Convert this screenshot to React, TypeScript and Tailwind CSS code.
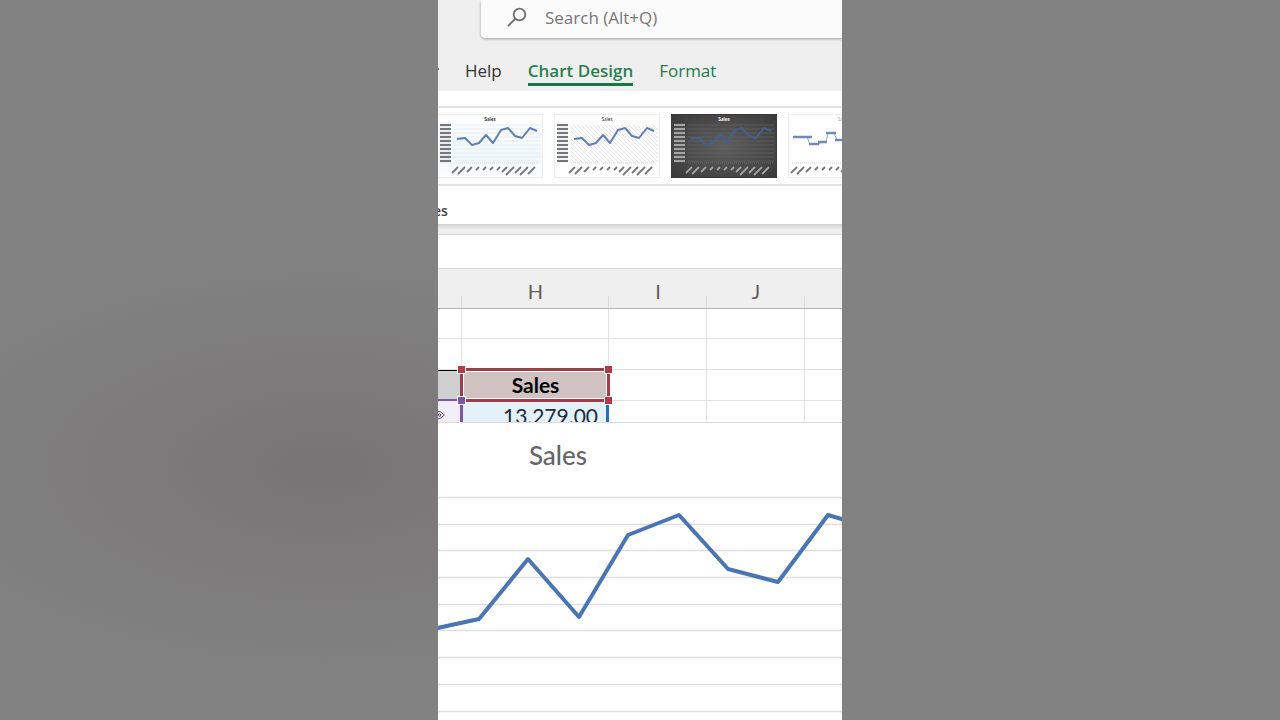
import React from 'react';

type ThumbVariant = 'tinted' | 'hatched' | 'dark' | 'stepped';

interface ChartThumbProps {
    variant: ThumbVariant;
}

const VARIANTS: ThumbVariant[] = ['tinted', 'hatched', 'dark', 'stepped'];

const TREND = '20,25 28,24 35,31 42,29 49,21 56,29 64,16 71,14 78,22 85,24 93,14 100,17';

// Length of every slanted month label below the small plots
const MONTHS = [6, 7, 5, 3, 3, 3, 3, 5, 8, 6, 8, 7];

const Y_TICKS = [11, 15, 19, 23, 27, 31, 35, 39, 43, 47];

const GRID_LINES = [75, 102, 128, 155, 182, 208, 235, 262, 289];

const SALES_LINE = '-10,207 41,196 90,136 141,194 190,112 241,92 290,146 340,159 390,92 410,98';

const ChartThumb: React.FC<ChartThumbProps> = ({ variant }) => {
    const dark = variant === 'dark';
    const stepped = variant === 'stepped';
    const ink = dark ? '#a4a4a4' : '#74777c';
    const firstMonth = stepped ? 9 : 21;

    return (
        <button type="button" aria-label={`Chart style: ${variant}`} className="shrink-0">
            <svg width="106" height="64" viewBox="0 0 106 64" className="block">
                <defs>
                    <pattern id="hatch" width="4" height="4" patternUnits="userSpaceOnUse">
                        <path d="M-1 -1L5 5M-1 3L1 5M3 -1L5 1" stroke="#dcdcdf" strokeWidth="0.7" />
                    </pattern>
                    <linearGradient id="tint" x1="0" y1="0" x2="0" y2="1">
                        <stop offset="0" stopColor="#fbfdfe" />
                        <stop offset="0.6" stopColor="#f1f8fc" />
                        <stop offset="1" stopColor="#fbfdfe" />
                    </linearGradient>
                    <radialGradient id="slate" r="0.7">
                        <stop offset="0" stopColor="#5e5e5e" />
                        <stop offset="1" stopColor="#3a3a3a" />
                    </radialGradient>
                </defs>
                <rect x="0.5" y="0.5" width="105" height="63" fill={dark ? 'url(#slate)' : '#fff'} stroke={dark ? '#3a3a3a' : '#ececec'} />
                {variant === 'tinted' && <rect x="1" y="10" width="104" height="53" fill="url(#tint)" />}
                {variant === 'hatched' && <rect x="17" y="11" width="87" height="38" fill="url(#hatch)" />}
                {!stepped && Y_TICKS.map((y) => (
                    <g key={y}>
                        {variant !== 'hatched' && <path d={`M17 ${y}H103`} stroke={dark ? '#656565' : '#dce7ec'} strokeWidth="0.7" />}
                        <path d={`M3 ${y}H14`} stroke={ink} strokeWidth="2.2" />
                    </g>
                ))}
                <path d={`M${stepped ? 4 : 17} 49H103`} stroke={dark ? '#777' : '#cfcfcf'} strokeWidth="0.8" strokeDasharray="1 1" />
                {MONTHS.map((len, i) => {
                    const x = firstMonth + i * 7;
                    return (
                        <path key={i} d={`M${x} 53L${x - len} ${53 + len}`} stroke={ink} strokeWidth="1.8" />
                    );
                })}
                <text
                    x={stepped ? 55 : 53}
                    y="7"
                    textAnchor="middle"
                    fontSize="5"
                    fontWeight={variant === 'hatched' || stepped ? 400 : 700}
                    fill={dark ? '#fff' : stepped ? '#aaa' : '#333'}
                    fontFamily="Lato, sans-serif"
                >
                    Sales
                </text>
                {stepped ? (
                    <>
                        <path d="M5 23H19L22 30H30L34 28H38L40 19H46L49 26H55L59 16H64" fill="none" stroke="#8fa6c8" strokeWidth="1" />
                        <path d="M5 23H24M21 30H31M30 28H39M38 19H48M47 26H55" stroke="#6f8cb8" strokeWidth="2.4" />
                    </>
                ) : (
                    <polyline points={TREND} fill="none" stroke={dark ? '#435f8a' : '#6080b4'} strokeWidth="2" strokeLinejoin="round" />
                )}
            </svg>
        </button>
    );
};

const Handle: React.FC<{ className: string }> = ({ className }) => (
    <span className={`absolute w-[9px] h-[9px] border border-white z-10 ${className}`} />
);

const Sheet: React.FC = () => (
    <div className="h-[154px] overflow-hidden border-t border-[#d9d9d9]">
        <table className="w-full table-fixed border-separate border-spacing-0 font-[Lato,sans-serif] text-[21px] leading-6">
            <colgroup>
                <col className="w-6" />
                <col className="w-[147px]" />
                <col className="w-[98px]" />
                <col className="w-[98px]" />
                <col />
            </colgroup>
            <thead>
                <tr className="h-10 bg-[#efefef] text-[#5d5d5d]">
                    {['', 'H', 'I', 'J', ''].map((name, i) => (
                        <th key={i} scope="col" className="relative border-b border-[#b5b5b5] p-0 pt-1 text-xl font-normal">
                            {name}
                            {i < 4 && <span className="absolute right-0 bottom-0 h-3 w-px bg-[#d9d9d9]" />}
                        </th>
                    ))}
                </tr>
            </thead>
            <tbody>
                {[0, 1].map((row) => (
                    <tr key={row} className={row === 0 ? 'h-[30px]' : 'h-[31px]'}>
                        {[0, 1, 2, 3, 4].map((col) => (
                            <td key={col} className="border-r border-b border-[#e1e1e4] p-0 last:border-r-0" />
                        ))}
                    </tr>
                ))}
                <tr className="h-[31px]">
                    <td className="border-t border-b-2 border-t-black border-b-[#7d56a5] bg-[#cfcfcf] p-0" />
                    <td className="relative bg-[#cfc2c1] p-0 pb-0.5 text-center font-bold text-black">
                        <span className="absolute -top-0.5 -right-px -bottom-px -left-0.5 border-3 border-[#9c3f48]" />
                        <span className="absolute top-px right-0.5 bottom-0.5 left-px border border-white" />
                        <Handle className="-top-[5px] -left-[5px] bg-[#b23a48]" />
                        <Handle className="-top-[5px] -right-1 bg-[#b23a48]" />
                        <Handle className="-bottom-1 -left-[5px] bg-[#7d56a5]" />
                        <Handle className="-right-1 -bottom-1 bg-[#b23a48]" />
                        Sales
                    </td>
                    {[2, 3, 4].map((col) => (
                        <td key={col} className="border-r border-b border-[#e1e1e4] p-0 last:border-r-0" />
                    ))}
                </tr>
                <tr className="h-[31px]">
                    <td className="border-r-2 border-[#7d56a5] bg-[#f1eef7] p-0">
                        <svg width="8" height="10" viewBox="0 0 8 10" fill="none" stroke="#4d4866" className="mb-1">
                            <path d="M0 1.5H2L6.5 5L2 8.5H0" strokeWidth="0.9" />
                            <circle cx="1.5" cy="5" r="1.3" />
                        </svg>
                    </td>
                    <td className="border-r-3 border-l border-r-[#1b74bd] border-l-[#7d56a5] bg-[#e4f1f8] p-0 pr-2 pb-0.5 text-right text-[#222b33]">
                        13,279.00
                    </td>
                    {[2, 3, 4].map((col) => (
                        <td key={col} className="border-r border-[#e1e1e4] p-0 last:border-r-0" />
                    ))}
                </tr>
            </tbody>
        </table>
    </div>
);

const SalesChart: React.FC = () => (
    <section className="relative h-[297px] overflow-hidden border-t border-[#dedede] bg-white">
        <svg width="404" height="298" viewBox="0 0 404 298" className="block w-full">
            {GRID_LINES.map((y) => (
                <path key={y} d={`M0 ${y - 0.5}H404`} stroke="#dfdfdf" strokeWidth="1.4" />
            ))}
            <polyline points={SALES_LINE} fill="none" stroke="#4a75b3" strokeWidth="4" strokeLinejoin="round" />
        </svg>
        <h2 className="absolute top-4 left-0 w-60 text-center font-[Lato,sans-serif] text-[26px] leading-8 font-medium text-[#666]">
            Sales
        </h2>
    </section>
);

const App: React.FC = () => {
    return (
        <div className="flex min-h-screen bg-[#828282] font-['Open_Sans',sans-serif]">
            <div className="flex-1 bg-[radial-gradient(ellipse_460px_220px_at_74%_65%,#777475,#7d7b7b_45%,#828282)]" />
            <main className="w-[404px] overflow-hidden bg-white">
                <header className="h-[91px] bg-[#efefef]">
                    <label className="ml-[43px] flex h-[38px] items-center gap-4 rounded-bl bg-[#fbfbfb] pl-[26px] pb-0.5 shadow-[0_1px_3px_rgba(0,0,0,0.35)]">
                        <svg width="22" height="22" viewBox="0 0 22 22" fill="none" stroke="#6e6e6e" strokeWidth="1.8" className="shrink-0">
                            <circle cx="12.5" cy="7.5" r="5.8" />
                            <path d="M8.4 11.6L1 19" />
                        </svg>
                        <input
                            type="text"
                            aria-label="Search"
                            placeholder="Search (Alt+Q)"
                            className="min-w-0 flex-1 bg-transparent text-[17px] outline-none placeholder:text-[#767676]"
                        />
                    </label>
                    <nav className="relative flex items-start gap-[26px] pt-[21px] pl-[27px] text-[17px] leading-6">
                        <span className="absolute top-[30px] left-0 h-0.5 w-px bg-[#777]" />
                        <button type="button" className="text-[#333]">Help</button>
                        <button type="button" className="border-b-[3px] border-[#1a7544] font-semibold text-[#2b7f50]">Chart Design</button>
                        <button type="button" className="text-[#1f7a48]">Format</button>
                    </nav>
                </header>

                <div className="pt-[15px]">
                    <div className="-ml-px flex h-20 items-start gap-[11px] overflow-hidden border-y-2 border-[#e3e3e3] pt-1.5">
                        {VARIANTS.map((variant) => (
                            <ChartThumb key={variant} variant={variant} />
                        ))}
                    </div>
                    <div className="flex h-[38px] items-center overflow-hidden pt-3 text-sm font-semibold text-[#444]">
                        <span className="-ml-[5px]">es</span>
                    </div>
                </div>

                <div className="h-[11px] border-b border-[#d9d9d9] bg-linear-to-b from-[#d2d2d2] to-[#efefef] to-60%" />
                <div className="h-[33px]" />

                <Sheet />
                <SalesChart />
            </main>
            <div className="flex-1" />
        </div>
    );
};

export default App;
